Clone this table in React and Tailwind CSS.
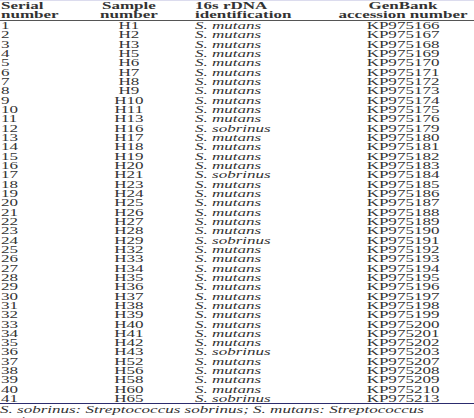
const rows = [
  [1, "H1", "m", 166], [2, "H2", "m", 167], [3, "H3", "m", 168], [4, "H5", "m", 169],
  [5, "H6", "m", 170], [6, "H7", "m", 171], [7, "H8", "m", 172], [8, "H9", "m", 173],
  [9, "H10", "m", 174], [10, "H11", "m", 175], [11, "H13", "m", 176], [12, "H16", "s", 179],
  [13, "H17", "m", 180], [14, "H18", "m", 181], [15, "H19", "m", 182], [16, "H20", "m", 183],
  [17, "H21", "s", 184], [18, "H23", "m", 185], [19, "H24", "m", 186], [20, "H25", "m", 187],
  [21, "H26", "m", 188], [22, "H27", "m", 189], [23, "H28", "m", 190], [24, "H29", "s", 191],
  [25, "H32", "m", 192], [26, "H33", "m", 193], [27, "H34", "m", 194], [28, "H35", "m", 195],
  [29, "H36", "m", 196], [30, "H37", "m", 197], [31, "H38", "m", 198], [32, "H39", "m", 199],
  [33, "H40", "m", 200], [34, "H41", "m", 201], [35, "H42", "m", 202], [36, "H43", "s", 203],
  [37, "H52", "m", 207], [38, "H56", "m", 208], [39, "H58", "m", 209], [40, "H60", "m", 210],
  [41, "H65", "s", 213],
];

const cols = "grid grid-cols-[50px_59.2px_95.8px_87.6px]";

export default function App() {
  return (
    <div className="w-[474px] h-[418px] overflow-hidden bg-white">
      <div
        className="w-[292.6px] origin-top-left scale-x-[1.62] text-[10.5px] text-[#333333]"
        style={{ fontFamily: '"Liberation Serif", "Times New Roman", serif' }}
      >
        <div className="h-[1px] bg-[#dcdcee]" />
        <div className={`${cols} font-bold leading-[9px] pb-[0.5px] border-b border-[#555555]`}>
          <div className="pl-[0.6px]">Serial<br />number</div>
          <div className="text-center">Sample<br />number</div>
          <div className="pl-[11.2px]">16s rDNA<br />identification</div>
          <div className="text-center">GenBank<br />accession number</div>
        </div>
        <div className="pt-[0.5px]">
          {rows.map(([n, h, sp, acc]) => (
            <div key={n} className={`${cols} h-[9.33px] leading-[9.33px]`}>
              <div className="pl-[0.6px]">{n}</div>
              <div className="text-center">{h}</div>
              <div className="pl-[11.2px] italic">{sp === "m" ? "S. mutans" : "S. sobrinus"}</div>
              <div className="text-center">KP975{acc}</div>
            </div>
          ))}
        </div>
        <div className="border-t border-[#2c2c6e] leading-[9.5px] italic pt-[1px]">
          S. sobrinus: Streptococcus sobrinus; S. mutans: Streptococcus mutans
        </div>
      </div>
    </div>
  );
}
